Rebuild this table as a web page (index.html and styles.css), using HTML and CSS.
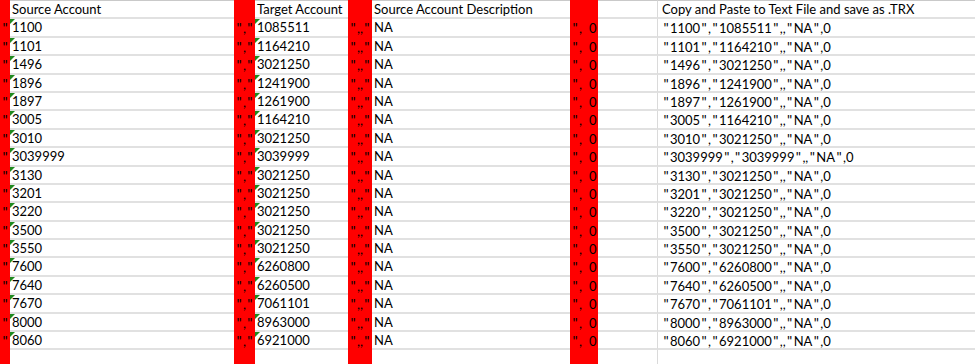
FILE: index.html
```html
<!DOCTYPE html>
<html>
<head>
<meta charset="utf-8">
<link rel="stylesheet" href="styles.css">
</head>
<body>
<div class="sheet">
  <div class="red"></div><div class="cell hd">Source Account</div><div class="red"></div><div class="cell hd">Target Account</div><div class="red"></div><div class="cell hd">Source Account Description</div><div class="red"></div><div class="cell hd"></div><div class="cell hd last">Copy and Paste to Text File and save as .TRX</div>

  <div class="red q1"><span class="qt">"</span></div><div class="cell err">1100</div><div class="red q3"><span class="qt">"</span>,<span class="qt">"</span></div><div class="cell err">1085511</div><div class="red q5"><span class="qt">"</span>,,<span class="qt">"</span></div><div class="cell">NA</div><div class="red q7"><span class="qt">"</span>,<span class="z">0</span></div><div class="cell"></div><div class="cell last"><span class="qt">"</span>1100<span class="qt">"</span>,<span class="qt">"</span>1085511<span class="qt">"</span>,,<span class="qt">"</span>NA<span class="qt">"</span>,0</div>
  <div class="red q1"><span class="qt">"</span></div><div class="cell err">1101</div><div class="red q3"><span class="qt">"</span>,<span class="qt">"</span></div><div class="cell err">1164210</div><div class="red q5"><span class="qt">"</span>,,<span class="qt">"</span></div><div class="cell">NA</div><div class="red q7"><span class="qt">"</span>,<span class="z">0</span></div><div class="cell"></div><div class="cell last"><span class="qt">"</span>1101<span class="qt">"</span>,<span class="qt">"</span>1164210<span class="qt">"</span>,,<span class="qt">"</span>NA<span class="qt">"</span>,0</div>
  <div class="red q1"><span class="qt">"</span></div><div class="cell err">1496</div><div class="red q3"><span class="qt">"</span>,<span class="qt">"</span></div><div class="cell err">3021250</div><div class="red q5"><span class="qt">"</span>,,<span class="qt">"</span></div><div class="cell">NA</div><div class="red q7"><span class="qt">"</span>,<span class="z">0</span></div><div class="cell"></div><div class="cell last"><span class="qt">"</span>1496<span class="qt">"</span>,<span class="qt">"</span>3021250<span class="qt">"</span>,,<span class="qt">"</span>NA<span class="qt">"</span>,0</div>
  <div class="red q1"><span class="qt">"</span></div><div class="cell err">1896</div><div class="red q3"><span class="qt">"</span>,<span class="qt">"</span></div><div class="cell err">1241900</div><div class="red q5"><span class="qt">"</span>,,<span class="qt">"</span></div><div class="cell">NA</div><div class="red q7"><span class="qt">"</span>,<span class="z">0</span></div><div class="cell"></div><div class="cell last"><span class="qt">"</span>1896<span class="qt">"</span>,<span class="qt">"</span>1241900<span class="qt">"</span>,,<span class="qt">"</span>NA<span class="qt">"</span>,0</div>
  <div class="red q1"><span class="qt">"</span></div><div class="cell err">1897</div><div class="red q3"><span class="qt">"</span>,<span class="qt">"</span></div><div class="cell err">1261900</div><div class="red q5"><span class="qt">"</span>,,<span class="qt">"</span></div><div class="cell">NA</div><div class="red q7"><span class="qt">"</span>,<span class="z">0</span></div><div class="cell"></div><div class="cell last"><span class="qt">"</span>1897<span class="qt">"</span>,<span class="qt">"</span>1261900<span class="qt">"</span>,,<span class="qt">"</span>NA<span class="qt">"</span>,0</div>
  <div class="red q1"><span class="qt">"</span></div><div class="cell err">3005</div><div class="red q3"><span class="qt">"</span>,<span class="qt">"</span></div><div class="cell err">1164210</div><div class="red q5"><span class="qt">"</span>,,<span class="qt">"</span></div><div class="cell">NA</div><div class="red q7"><span class="qt">"</span>,<span class="z">0</span></div><div class="cell"></div><div class="cell last"><span class="qt">"</span>3005<span class="qt">"</span>,<span class="qt">"</span>1164210<span class="qt">"</span>,,<span class="qt">"</span>NA<span class="qt">"</span>,0</div>
  <div class="red q1"><span class="qt">"</span></div><div class="cell err">3010</div><div class="red q3"><span class="qt">"</span>,<span class="qt">"</span></div><div class="cell err">3021250</div><div class="red q5"><span class="qt">"</span>,,<span class="qt">"</span></div><div class="cell">NA</div><div class="red q7"><span class="qt">"</span>,<span class="z">0</span></div><div class="cell"></div><div class="cell last"><span class="qt">"</span>3010<span class="qt">"</span>,<span class="qt">"</span>3021250<span class="qt">"</span>,,<span class="qt">"</span>NA<span class="qt">"</span>,0</div>
  <div class="red q1"><span class="qt">"</span></div><div class="cell err">3039999</div><div class="red q3"><span class="qt">"</span>,<span class="qt">"</span></div><div class="cell err">3039999</div><div class="red q5"><span class="qt">"</span>,,<span class="qt">"</span></div><div class="cell">NA</div><div class="red q7"><span class="qt">"</span>,<span class="z">0</span></div><div class="cell"></div><div class="cell last"><span class="qt">"</span>3039999<span class="qt">"</span>,<span class="qt">"</span>3039999<span class="qt">"</span>,,<span class="qt">"</span>NA<span class="qt">"</span>,0</div>
  <div class="red q1"><span class="qt">"</span></div><div class="cell err">3130</div><div class="red q3"><span class="qt">"</span>,<span class="qt">"</span></div><div class="cell err">3021250</div><div class="red q5"><span class="qt">"</span>,,<span class="qt">"</span></div><div class="cell">NA</div><div class="red q7"><span class="qt">"</span>,<span class="z">0</span></div><div class="cell"></div><div class="cell last"><span class="qt">"</span>3130<span class="qt">"</span>,<span class="qt">"</span>3021250<span class="qt">"</span>,,<span class="qt">"</span>NA<span class="qt">"</span>,0</div>
  <div class="red q1"><span class="qt">"</span></div><div class="cell err">3201</div><div class="red q3"><span class="qt">"</span>,<span class="qt">"</span></div><div class="cell err">3021250</div><div class="red q5"><span class="qt">"</span>,,<span class="qt">"</span></div><div class="cell">NA</div><div class="red q7"><span class="qt">"</span>,<span class="z">0</span></div><div class="cell"></div><div class="cell last"><span class="qt">"</span>3201<span class="qt">"</span>,<span class="qt">"</span>3021250<span class="qt">"</span>,,<span class="qt">"</span>NA<span class="qt">"</span>,0</div>
  <div class="red q1"><span class="qt">"</span></div><div class="cell err">3220</div><div class="red q3"><span class="qt">"</span>,<span class="qt">"</span></div><div class="cell err">3021250</div><div class="red q5"><span class="qt">"</span>,,<span class="qt">"</span></div><div class="cell">NA</div><div class="red q7"><span class="qt">"</span>,<span class="z">0</span></div><div class="cell"></div><div class="cell last"><span class="qt">"</span>3220<span class="qt">"</span>,<span class="qt">"</span>3021250<span class="qt">"</span>,,<span class="qt">"</span>NA<span class="qt">"</span>,0</div>
  <div class="red q1"><span class="qt">"</span></div><div class="cell err">3500</div><div class="red q3"><span class="qt">"</span>,<span class="qt">"</span></div><div class="cell err">3021250</div><div class="red q5"><span class="qt">"</span>,,<span class="qt">"</span></div><div class="cell">NA</div><div class="red q7"><span class="qt">"</span>,<span class="z">0</span></div><div class="cell"></div><div class="cell last"><span class="qt">"</span>3500<span class="qt">"</span>,<span class="qt">"</span>3021250<span class="qt">"</span>,,<span class="qt">"</span>NA<span class="qt">"</span>,0</div>
  <div class="red q1"><span class="qt">"</span></div><div class="cell err">3550</div><div class="red q3"><span class="qt">"</span>,<span class="qt">"</span></div><div class="cell err">3021250</div><div class="red q5"><span class="qt">"</span>,,<span class="qt">"</span></div><div class="cell">NA</div><div class="red q7"><span class="qt">"</span>,<span class="z">0</span></div><div class="cell"></div><div class="cell last"><span class="qt">"</span>3550<span class="qt">"</span>,<span class="qt">"</span>3021250<span class="qt">"</span>,,<span class="qt">"</span>NA<span class="qt">"</span>,0</div>
  <div class="red q1"><span class="qt">"</span></div><div class="cell err">7600</div><div class="red q3"><span class="qt">"</span>,<span class="qt">"</span></div><div class="cell err">6260800</div><div class="red q5"><span class="qt">"</span>,,<span class="qt">"</span></div><div class="cell">NA</div><div class="red q7"><span class="qt">"</span>,<span class="z">0</span></div><div class="cell"></div><div class="cell last"><span class="qt">"</span>7600<span class="qt">"</span>,<span class="qt">"</span>6260800<span class="qt">"</span>,,<span class="qt">"</span>NA<span class="qt">"</span>,0</div>
  <div class="red q1"><span class="qt">"</span></div><div class="cell err">7640</div><div class="red q3"><span class="qt">"</span>,<span class="qt">"</span></div><div class="cell err">6260500</div><div class="red q5"><span class="qt">"</span>,,<span class="qt">"</span></div><div class="cell">NA</div><div class="red q7"><span class="qt">"</span>,<span class="z">0</span></div><div class="cell"></div><div class="cell last"><span class="qt">"</span>7640<span class="qt">"</span>,<span class="qt">"</span>6260500<span class="qt">"</span>,,<span class="qt">"</span>NA<span class="qt">"</span>,0</div>
  <div class="red q1"><span class="qt">"</span></div><div class="cell err">7670</div><div class="red q3"><span class="qt">"</span>,<span class="qt">"</span></div><div class="cell err">7061101</div><div class="red q5"><span class="qt">"</span>,,<span class="qt">"</span></div><div class="cell">NA</div><div class="red q7"><span class="qt">"</span>,<span class="z">0</span></div><div class="cell"></div><div class="cell last"><span class="qt">"</span>7670<span class="qt">"</span>,<span class="qt">"</span>7061101<span class="qt">"</span>,,<span class="qt">"</span>NA<span class="qt">"</span>,0</div>
  <div class="red q1"><span class="qt">"</span></div><div class="cell err">8000</div><div class="red q3"><span class="qt">"</span>,<span class="qt">"</span></div><div class="cell err">8963000</div><div class="red q5"><span class="qt">"</span>,,<span class="qt">"</span></div><div class="cell">NA</div><div class="red q7"><span class="qt">"</span>,<span class="z">0</span></div><div class="cell"></div><div class="cell last"><span class="qt">"</span>8000<span class="qt">"</span>,<span class="qt">"</span>8963000<span class="qt">"</span>,,<span class="qt">"</span>NA<span class="qt">"</span>,0</div>
  <div class="red q1"><span class="qt">"</span></div><div class="cell err">8060</div><div class="red q3"><span class="qt">"</span>,<span class="qt">"</span></div><div class="cell err">6921000</div><div class="red q5"><span class="qt">"</span>,,<span class="qt">"</span></div><div class="cell">NA</div><div class="red q7"><span class="qt">"</span>,<span class="z">0</span></div><div class="cell"></div><div class="cell last"><span class="qt">"</span>8060<span class="qt">"</span>,<span class="qt">"</span>6921000<span class="qt">"</span>,,<span class="qt">"</span>NA<span class="qt">"</span>,0</div>

  <div class="red"></div><div class="cell"></div><div class="red"></div><div class="cell"></div><div class="red"></div><div class="cell"></div><div class="red"></div><div class="cell"></div><div class="cell last"></div>
</div>
</body>
</html>
```

FILE: styles.css
```css
html, body {
  margin: 0;
  padding: 0;
  background: #ffffff;
  overflow: hidden;
}

.sheet {
  display: grid;
  grid-template-columns: 10px 224px 21px 93px 24px 198px 28px 59px 1fr;
  grid-template-rows: 19.4px repeat(19, 18.4px);
  width: 975px;
  font-family: Lato, "Liberation Sans", sans-serif;
  font-size: 13px;
  color: #000000;
}

.red {
  background: #ff0000;
  line-height: 18px;
  white-space: pre;
  color: #000;
  overflow: hidden;
}

.cell {
  position: relative;
  box-sizing: border-box;
  border-bottom: 2px solid #e1e1e1;
  padding-left: 2px;
  line-height: 17px;
  white-space: nowrap;
  overflow: hidden;
}

.hd {
  border-top: 1px solid #c9c9c9;
}

.last {
  border-left: 1px solid #dadada;
  padding-left: 4px;
}

.err::before {
  content: "";
  position: absolute;
  left: 0;
  top: 0;
  width: 0;
  height: 0;
  border-top: 5px solid #1f8a1f;
  border-right: 5px solid transparent;
}

.qt {
  font-size: 14px;
  padding: 0 1.4px;
}

.z {
  margin-left: 7px;
}

.q1 { padding-left: 1px; }
.q3 { padding-left: 1px; }
.q5 { padding-left: 1px; }
.q7 { padding-left: 1px; }
```
